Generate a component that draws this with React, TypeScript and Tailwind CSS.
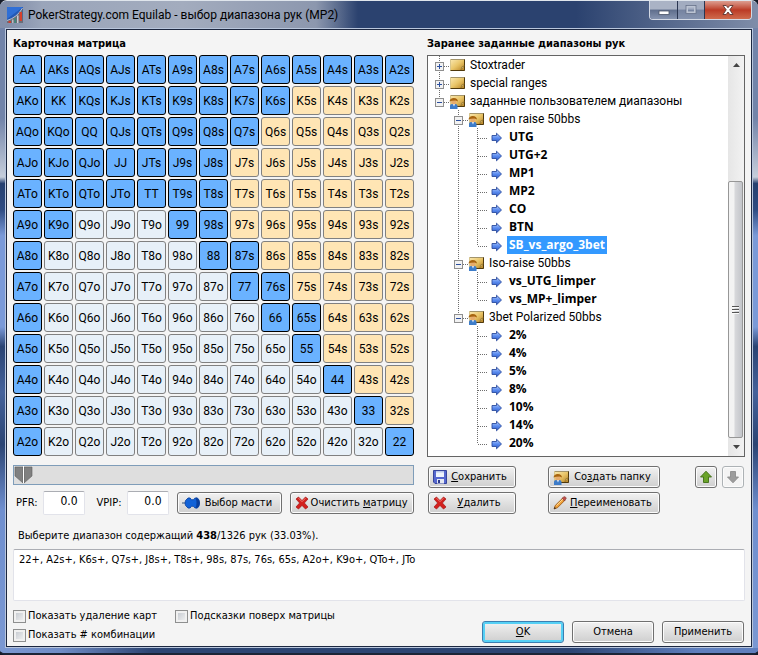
import { useState } from "react";
import type { ReactNode } from "react";

type FolderNode = {
  id: string;
  label: string;
  user?: boolean;
  open?: boolean;
  ranges?: string[];
  children?: FolderNode[];
};

const RANKS = ["A", "K", "Q", "J", "T", "9", "8", "7", "6", "5", "4", "3", "2"];

const SELECTED = new Set([
  "AKs", "AQs", "AJs", "ATs", "A9s", "A8s", "A7s", "A6s", "A5s", "A4s", "A3s", "A2s",
  "AKo", "AQo", "AJo", "ATo", "A9o", "A8o", "A7o", "A6o", "A5o", "A4o", "A3o", "A2o",
  "KQs", "KJs", "KTs", "K9s", "K8s", "K7s", "K6s",
  "KQo", "KJo", "KTo", "K9o",
  "QJs", "QTs", "Q9s", "Q8s", "Q7s", "QJo", "QTo",
  "JTs", "J9s", "J8s", "JTo", "T9s", "T8s",
  "98s", "87s", "76s", "65s",
  ...RANKS.map((r) => r + r),
]);

const TREE: FolderNode[] = [
  { id: "stox", label: "Stoxtrader" },
  { id: "special", label: "special ranges" },
  {
    id: "custom",
    label: "заданные пользователем диапазоны",
    user: true,
    open: true,
    children: [
      {
        id: "open50",
        label: "open raise 50bbs",
        user: true,
        open: true,
        ranges: ["UTG", "UTG+2", "MP1", "MP2", "CO", "BTN", "SB_vs_argo_3bet"],
      },
      {
        id: "iso50",
        label: "Iso-raise 50bbs",
        user: true,
        open: true,
        ranges: ["vs_UTG_limper", "vs_MP+_limper"],
      },
      {
        id: "3bet50",
        label: "3bet Polarized 50bbs",
        user: true,
        open: true,
        ranges: ["2%", "4%", "5%", "8%", "10%", "14%", "20%"],
      },
    ],
  },
];

const handName = (row: number, col: number) => {
  if (row === col) return RANKS[row] + RANKS[row];
  return row < col
    ? `${RANKS[row]}${RANKS[col]}s`
    : `${RANKS[col]}${RANKS[row]}o`;
};

/* ICONS */

const AppIcon = () => (
  <svg width="16" height="16" viewBox="0 0 16 16" className="shrink-0">
    <rect width="16" height="16" fill="#2459b4" />
    <path d="M0 0h16L0 12z" fill="#2f6fd6" />
    <path d="M0 13.500Q10 10.500 15.500 1L16 16H0z" fill="#6a6e78" />
    <path d="M0 13.500Q10 10.500 15.500 1" fill="none" stroke="#d5d9e2" strokeWidth="0.800" />
    <path d="M1.500 14H4v2H1.500z" fill="#d33b2c" />
    <path d="M5 12.500h1.500V16H5z" fill="#b9bcc4" />
    <path d="M7.500 11H9v5H7.500z" fill="#3e8a7d" />
    <path d="M10 8.500h1.500V16H10z" fill="#c9ccd4" />
    <path d="M12.500 5H15v9h-2.500z" fill="#d6402c" />
  </svg>
);

const FolderIcon = ({ user = false }: { user?: boolean }) => (
  <svg width="17" height="16" viewBox="0 0 17 16" className="shrink-0">
    <defs>
      <linearGradient id="folderFill" x1="0" y1="0" x2="1" y2="1">
        <stop offset="0" stopColor="#fbeab4" />
        <stop offset="0.5" stopColor="#e9c568" />
        <stop offset="1" stopColor="#b37d20" />
      </linearGradient>
    </defs>
    <path d="M1.500 2H16v11.500H1.500z" fill="url(#folderFill)" />
    <path d="M1.500 2.500H16" stroke="#a3946a" />
    <path d="M1.500 2.500v11" stroke="#d9c68d" />
    <path d="M1.500 13.500h14V2.500" fill="none" stroke="#4f390d" />
    <path d="m12 12.800.8-3 2.500-1z" fill="#fff0b8" stroke="#8a671d" strokeWidth="0.700" />
    {user && (
      <>
        <path d="M1 16v-3Q1 10.700 4.700 10.700T8.500 13v3z" fill="#3d7cc9" />
        <path d="M3.800 11h2.400L5 13.500z" fill="#dcebff" />
        <circle cx="4.800" cy="8.700" r="2.600" fill="#e6ab6c" />
        <path d="M.5 8.500Q1 5.200 4.800 5q3.900.2 4.200 3.500L6.500 7.400 3 7.800z" fill="#a8640f" />
      </>
    )}
  </svg>
);

const RangeIcon = () => (
  <svg width="12" height="12" viewBox="0 0 12 12" className="shrink-0">
    <defs>
      <linearGradient id="rangeFill" x1="0" y1="0" x2="0" y2="1">
        <stop offset="0" stopColor="#b9d2fb" />
        <stop offset="0.5" stopColor="#5b8cf0" />
        <stop offset="1" stopColor="#2a55c4" />
      </linearGradient>
    </defs>
    <path
      d="M1 3.500h4.500V1.200L10.500 6l-5 4.800V8.500H1z"
      fill="url(#rangeFill)"
      stroke="#2c4d9e"
      strokeWidth="0.900"
    />
  </svg>
);

const CrossIcon = () => (
  <svg width="14" height="14" viewBox="0 0 14 14" className="shrink-0">
    <path
      d="M3.500 1 7 4.600 10.500 1 13 3 9.400 7 13 11l-2.500 2L7 9.400 3.500 13 1 11l3.600-4L1 3z"
      fill="#d3201d"
      stroke="#a51414"
      strokeWidth="0.700"
    />
    <path d="m3.500 2.200 3.500 3.500 3.500-3.500" fill="none" stroke="#f0776f" />
  </svg>
);

const DiskIcon = () => (
  <svg width="14" height="14" viewBox="0 0 14 14" className="shrink-0">
    <path d="M.5.500h13v13H2L.5 12z" fill="#5567cf" stroke="#37459a" />
    <path d="M3 1h8v6H3z" fill="#eef3fb" />
    <path d="M3 1h8v1.500H3z" fill="#b9c6ea" />
    <path d="M4 9h7v4.500H4z" fill="#e4e8f2" />
    <path d="M5 10h2v3H5z" fill="#2c3a8c" />
  </svg>
);

const SuitIcon = () => (
  <svg width="18" height="12" viewBox="0 0 18 12" className="shrink-0">
    <path d="M0 6h4" stroke="#33527a" />
    <path
      d="M3.500 3.500 6 1q2.500-.8 3.500 1.700h1.800Q12.500.5 15 .8 17.600 2 17.600 6T15 11.200q-2.500.3-3.700-1.900H9.500Q8.500 11.800 6 11L3.500 8.500q-1-2.500 0-5z"
      fill="#1263d8"
      stroke="#0a3f9c"
      strokeWidth="0.800"
    />
    <path d="M13.500 1q3.900 0 4 5t-4 5q2-5 0-10z" fill="#0a3f9c" />
  </svg>
);

const PencilIcon = () => (
  <svg width="14" height="14" viewBox="0 0 14 14" className="shrink-0">
    <path d="m1 13 1.200-3.500L9.800 2l2.200 2.200-7.500 7.500z" fill="#f0a23c" stroke="#925210" strokeWidth="0.800" />
    <path d="m9 2.500 2-1.800q1.500-.4 2.300 1.500L11.500 5z" fill="#c1504c" stroke="#7d2d28" strokeWidth="0.600" />
    <path d="m3.500 9.500 6.500-6.500" stroke="#ffd993" />
    <path d="m1 13 .7-2 1.300 1.300z" fill="#222" />
  </svg>
);

const MoveIcon = ({ down = false }: { down?: boolean }) => (
  <svg
    width="14"
    height="14"
    viewBox="0 0 14 14"
    className={down ? "shrink-0 rotate-180" : "shrink-0"}
  >
    <path
      d="M7 1.200 12.500 7H9.500v5.500h-5V7h-3z"
      fill={down ? "#9c9c9c" : "#6aa329"}
      stroke={down ? "#8c8c8c" : "#3f6d14"}
      strokeWidth="0.900"
    />
  </svg>
);

/* CONTROLS */

const PushButton = ({
  icon,
  children,
  className = "",
  primary = false,
}: {
  icon?: ReactNode;
  children: ReactNode;
  className?: string;
  primary?: boolean;
}) => (
  <button
    type="button"
    className={`flex h-[22px] items-center rounded-[3px] border bg-linear-to-b from-[#f2f2f2] from-0% via-[#dedede] via-55% to-[#cfcfcf] px-1 whitespace-nowrap ${
      primary
        ? "border-[#3c7fb1] inset-ring-2 inset-ring-[#55d0f5]"
        : "border-[#707070] inset-ring inset-ring-[#fcfcfc]"
    } ${className}`}
  >
    {icon}
    <span className="flex-1 text-center">{children}</span>
  </button>
);

const CheckBox = ({ id, children }: { id: string; children: ReactNode }) => (
  <div className="flex h-4 items-center gap-0.5">
    <input
      id={id}
      type="checkbox"
      className="size-[13px] appearance-none border border-[#8e8f8f] bg-linear-to-br from-[#bfc4cb] to-[#f6f6f6] inset-ring-2 inset-ring-[#f0f0f0] checked:bg-[#66b2ff]"
    />
    <label htmlFor={id}>{children}</label>
  </div>
);

const PercentField = ({ id, label }: { id: string; label: string }) => (
  <div className="flex items-center gap-[5px]">
    <label htmlFor={id}>{label}</label>
    <input
      id={id}
      defaultValue="0.0"
      className="h-6 w-[42px] rounded-[2px] border border-[#e2e3ea] border-t-[#abadb3] bg-white pr-1.5 pb-1 text-right text-[12px]"
    />
  </div>
);

/* TREE */

const Guide = ({
  top = false,
  bottom = false,
  branch = false,
  box,
}: {
  top?: boolean;
  bottom?: boolean;
  branch?: boolean;
  box?: "plus" | "minus";
}) => (
  <svg width="19" height="18" viewBox="0 0 19 18" className="shrink-0" shapeRendering="crispEdges">
    <g stroke="#6e6e6e" strokeDasharray="1 1">
      {top && <path d="M9.500 0v10" />}
      {bottom && <path d="M9.500 10v8" />}
      {branch && <path d="M10 10.500h9" />}
    </g>
    {box && (
      <>
        <rect x="5.500" y="6.500" width="8" height="8" fill="#f2f2f2" stroke="#8f8f8f" />
        <path d="M7 10.500h5" stroke="#2b4f9e" />
        {box === "plus" && <path d="M9.500 8v5" stroke="#2b4f9e" />}
      </>
    )}
  </svg>
);

const RangeTree = () => {
  const [active, setActive] = useState("SB_vs_argo_3bet");

  const renderFolder = (node: FolderNode, depth: number, index: number, total: number) => {
    const last = index === total - 1;

    return (
      <li key={node.id}>
        <div className="flex h-[18px] items-center">
          {depth > 0 && <Guide />}
          <Guide top bottom={!last} branch box={node.open ? "minus" : "plus"} />
          <FolderIcon user={node.user} />
          <span className="pl-1 font-['Roboto','Noto_Sans',sans-serif] whitespace-nowrap">
            {node.label}
          </span>
        </div>

        {node.children && (
          <ul>
            {node.children.map((child, i) =>
              renderFolder(child, depth + 1, i, node.children!.length),
            )}
          </ul>
        )}

        {node.ranges && (
          <ul>
            {node.ranges.map((range, i) => (
              <li key={range} className="flex h-[18px] items-center">
                <Guide />
                <Guide top={!last} bottom={!last} />
                <Guide top bottom={i < node.ranges!.length - 1} branch />
                <span className="pt-0.5 pr-1 pl-1">
                  <RangeIcon />
                </span>
                <button
                  type="button"
                  onClick={() => setActive(range)}
                  className={`h-[18px] px-0.5 leading-[18px] font-bold whitespace-nowrap ${
                    active === range ? "bg-[#3399ff] text-white" : ""
                  }`}
                >
                  {range}
                </button>
              </li>
            ))}
          </ul>
        )}
      </li>
    );
  };

  return (
    <div className="flex min-h-0 flex-1 overflow-hidden border border-[#646464] bg-white">
      <ul className="flex-1 overflow-hidden pl-0.5 font-['Open_Sans','Noto_Sans',sans-serif] text-[12px]">
        {TREE.map((node, i) => renderFolder(node, 0, i, TREE.length))}
      </ul>

      {/* SCROLLBAR */}
      <div className="flex w-4 shrink-0 flex-col bg-linear-to-r from-[#e6e6e6] to-[#f2f2f2]">
        <button type="button" aria-label="Вверх" className="flex h-[18px] items-center justify-center">
          <svg width="7" height="4" viewBox="0 0 7 4">
            <path d="M0 4 3.500 0 7 4z" fill="#444" />
          </svg>
        </button>
        <div className="flex-[108]" />
        <div className="mr-px flex flex-[257] items-center justify-center rounded-[2px] border border-[#979797] bg-linear-to-r from-[#f3f3f3] from-35% via-[#d6d7da] via-50% to-[#c3c5ca]">
          <svg width="7" height="8" viewBox="0 0 7 8" shapeRendering="crispEdges">
            <path d="M0 .5h7M0 3.500h7M0 6.500h7" stroke="#555" />
            <path d="M0 1.500h7M0 4.500h7M0 7.500h7" stroke="#fafafa" />
          </svg>
        </div>
        <button type="button" aria-label="Вниз" className="flex h-[18px] items-center justify-center">
          <svg width="7" height="4" viewBox="0 0 7 4">
            <path d="M0 0h7L3.500 4z" fill="#444" />
          </svg>
        </button>
      </div>
    </div>
  );
};

/* MATRIX */

const HandMatrix = () => {
  const [selected, setSelected] = useState(SELECTED);

  const toggle = (hand: string) => {
    const next = new Set(selected);
    if (!next.delete(hand)) next.add(hand);
    setSelected(next);
  };

  return (
    <div className="grid grid-cols-13 gap-0.5">
      {RANKS.map((_, row) =>
        RANKS.map((_, col) => {
          const hand = handName(row, col);
          const color = selected.has(hand)
            ? "border-black bg-[#6ab2ff]"
            : row < col
              ? "border-[#808080] bg-[#ffe5b4]"
              : "border-[#808080] bg-[#e7f0f8]";

          return (
            <button
              key={hand}
              type="button"
              onClick={() => toggle(hand)}
              className={`flex aspect-square min-w-0 items-center justify-center rounded-[3px] border font-['Roboto','Open_Sans',sans-serif] text-[12px] ${color}`}
            >
              {hand}
            </button>
          );
        }),
      )}
    </div>
  );
};

const TitleBar = () => (
  <header className="flex h-[27px] items-start justify-between bg-[linear-gradient(90deg,#8390ab_0%,#75839f_15%,#2b426f_46%,#2b426f_76%,#7f8da9_100%)] pr-[6px] pl-[7px]">
    <div className="flex h-full items-center gap-[5px] bg-[linear-gradient(90deg,transparent,#9aa5ba_10%,#a3acbe_50%,#8c97ae_88%,transparent)] pr-5">
      <AppIcon />
      <h1 className="font-['Roboto','Noto_Sans',sans-serif] text-[12px] whitespace-nowrap text-black">
        PokerStrategy.com Equilab - выбор диапазона рук (MP2)
      </h1>
    </div>

    <div className="flex h-[19px] shrink-0 overflow-hidden rounded-b-[4px] border border-t-0 border-[#d3d9e4]">
      <button
        type="button"
        aria-label="Свернуть"
        className="flex w-7 items-center justify-center border-r border-[#2a3651] bg-linear-to-b from-[#aab3c5] from-45% via-[#5f6e8c] via-50% to-[#8593af]"
      >
        <svg width="12" height="12" viewBox="0 0 12 12">
          <rect x="1" y="7" width="10" height="3.500" fill="#fff" stroke="#4a5468" strokeWidth="0.800" />
        </svg>
      </button>
      <button
        type="button"
        aria-label="Развернуть"
        disabled
        className="flex w-[27px] items-center justify-center border-r border-[#2a3651] bg-linear-to-b from-[#a2acc0] from-45% via-[#7583a0] via-50% to-[#8593af]"
      >
        <svg width="12" height="12" viewBox="0 0 12 12">
          <rect x="2" y="2.500" width="8" height="6" fill="none" stroke="#bcc4d3" strokeWidth="2" />
          <rect x="1" y="1.500" width="10" height="8" fill="none" stroke="#5f6a82" strokeWidth="0.700" />
        </svg>
      </button>
      <button
        type="button"
        aria-label="Закрыть"
        className="flex w-[46px] items-center justify-center bg-linear-to-b from-[#dc9d90] from-0% via-[#bb3a25] via-50% to-[#cf6a4c]"
      >
        <svg width="12" height="12" viewBox="0 0 12 12">
          <path
            d="M1 1.500h3.200L6 3.700l1.800-2.200H11L7.800 5.800l3.200 4.700H7.800L6 8l-1.800 2.500H1l3.200-4.700z"
            fill="#fff"
            stroke="#5c3430"
            strokeWidth="0.900"
          />
        </svg>
      </button>
    </div>
  </header>
);

const App = () => {
  const [combo, setCombo] = useState(
    "22+, A2s+, K6s+, Q7s+, J8s+, T8s+, 98s, 87s, 76s, 65s, A2o+, K9o+, QTo+, JTo",
  );

  return (
    <div className="bg-[#141a28]">
      <div className="overflow-hidden rounded-t-[7px] rounded-b-[5px] border-t border-b-2 border-t-[#dfe5ec] border-b-[#1b2436] bg-[linear-gradient(180deg,#7284a9_8%,#7284a9_18%,#c6cedb_27%,#26406f_28%,#2f4c82_32%,#7b9ad8_36%,#7b9ad8_50%,#2b4473_53%,#45629b_60%,#2b4473_68%,#6f8fcf_78%,#7b98d2_100%)] font-['DejaVu_Sans_Condensed','Liberation_Sans',sans-serif] text-[11px] text-black">
        <TitleBar />

        <div className="px-[5px]">
          <main className="border border-[#b9c6dc] bg-[#f4f4f4] inset-ring inset-ring-[#1c2740] px-[7px] pt-2 pb-1">
            <div className="grid grid-cols-[401fr_318fr] gap-[13px]">
              {/* LEFT COLUMN */}
              <section className="min-w-0">
                <h2 className="mb-1 h-[14px] leading-[14px] font-bold">Карточная матрица</h2>
                <HandMatrix />

                <div className="mt-[9px] flex h-5 border border-[#7f9db9] bg-[#dedede]">
                  <svg width="19" height="18" viewBox="0 0 19 18" className="shrink-0">
                    <path d="M1 1h8v16L1 10z" fill="#808080" stroke="#5c5c5c" strokeWidth="0.600" />
                    <path d="M10 1h8v9l-8 7z" fill="#808080" stroke="#5c5c5c" strokeWidth="0.600" />
                    <path d="M9.500 0v17" stroke="#fff" />
                  </svg>
                </div>

                <div className="mt-1.5 flex items-center gap-2 pl-[3px]">
                  <div className="mr-auto flex gap-3">
                    <PercentField id="pfr" label="PFR:" />
                    <PercentField id="vpip" label="VPIP:" />
                  </div>
                  <PushButton icon={<SuitIcon />} className="w-[106px]">
                    Выбор масти
                  </PushButton>
                  <PushButton icon={<CrossIcon />} className="w-[124px]">
                    Очистить <u>м</u>атрицу
                  </PushButton>
                </div>
              </section>

              {/* RIGHT COLUMN */}
              <section className="flex min-w-0 flex-col">
                <h2 className="mb-1 h-[14px] shrink-0 leading-[14px] font-bold">
                  Заранее заданные диапазоны рук
                </h2>
                <RangeTree />

                <div className="mt-[9px] flex items-start gap-8 px-px pb-px">
                  <div className="flex flex-col gap-1">
                    <PushButton icon={<DiskIcon />} className="w-[88px]">
                      <u>С</u>охранить
                    </PushButton>
                    <PushButton icon={<CrossIcon />} className="w-[88px]">
                      <u>У</u>далить
                    </PushButton>
                  </div>
                  <div className="flex flex-col gap-1">
                    <PushButton icon={<FolderIcon user />} className="w-[112px]">
                      Со<u>з</u>дать папку
                    </PushButton>
                    <PushButton icon={<PencilIcon />} className="w-[112px]">
                      <u>П</u>ереименовать
                    </PushButton>
                  </div>
                  <div className="ml-auto flex gap-[5px]">
                    <button
                      type="button"
                      aria-label="Выше"
                      className="flex size-[22px] items-center justify-center rounded-[3px] border border-[#707070] bg-linear-to-b from-[#f2f2f2] to-[#cfcfcf] inset-ring inset-ring-[#fcfcfc]"
                    >
                      <MoveIcon />
                    </button>
                    <button
                      type="button"
                      aria-label="Ниже"
                      disabled
                      className="flex size-[22px] items-center justify-center rounded-[3px] border border-[#adb2b5] bg-[#f4f4f4] inset-ring inset-ring-[#fcfcfc]"
                    >
                      <MoveIcon down />
                    </button>
                  </div>
                </div>
              </section>
            </div>

            <label htmlFor="combo" className="mt-3 mb-1 block h-[18px] pl-[5px] leading-[18px]">
              Выберите диапазон содержащий <b>438</b>/1326 рук (33.03%).
            </label>
            <textarea
              id="combo"
              value={combo}
              onChange={(e) => setCombo(e.target.value)}
              className="block h-[52px] w-full resize-none rounded-[2px] border border-[#e2e3ea] border-t-[#abadb3] bg-white px-[5px] pt-[3px] leading-[14px]"
            />

            <footer className="mt-[7px] flex items-end justify-between">
              <div className="grid grid-cols-[auto_auto] gap-x-[18px] gap-y-[3px]">
                <CheckBox id="removal">Показать удаление карт</CheckBox>
                <CheckBox id="hints">Подсказки поверх матрицы</CheckBox>
                <CheckBox id="count">Показать # комбинации</CheckBox>
              </div>
              <div className="flex gap-2 pr-px">
                <PushButton primary className="w-[82px]">
                  <u>O</u>K
                </PushButton>
                <PushButton className="w-[82px]">Отмена</PushButton>
                <PushButton className="w-[82px]">Применить</PushButton>
              </div>
            </footer>
          </main>
        </div>

        {/* BOTTOM EDGE OF THE FRAME */}
        <div className="h-[5px] bg-[linear-gradient(90deg,#7b98d2_0%,#6f8cc6_8%,#2c4472_20%,#2c4472_75%,#5f7fbe_92%,#5f7fbe_100%)]" />
      </div>
    </div>
  );
};

export default App;
